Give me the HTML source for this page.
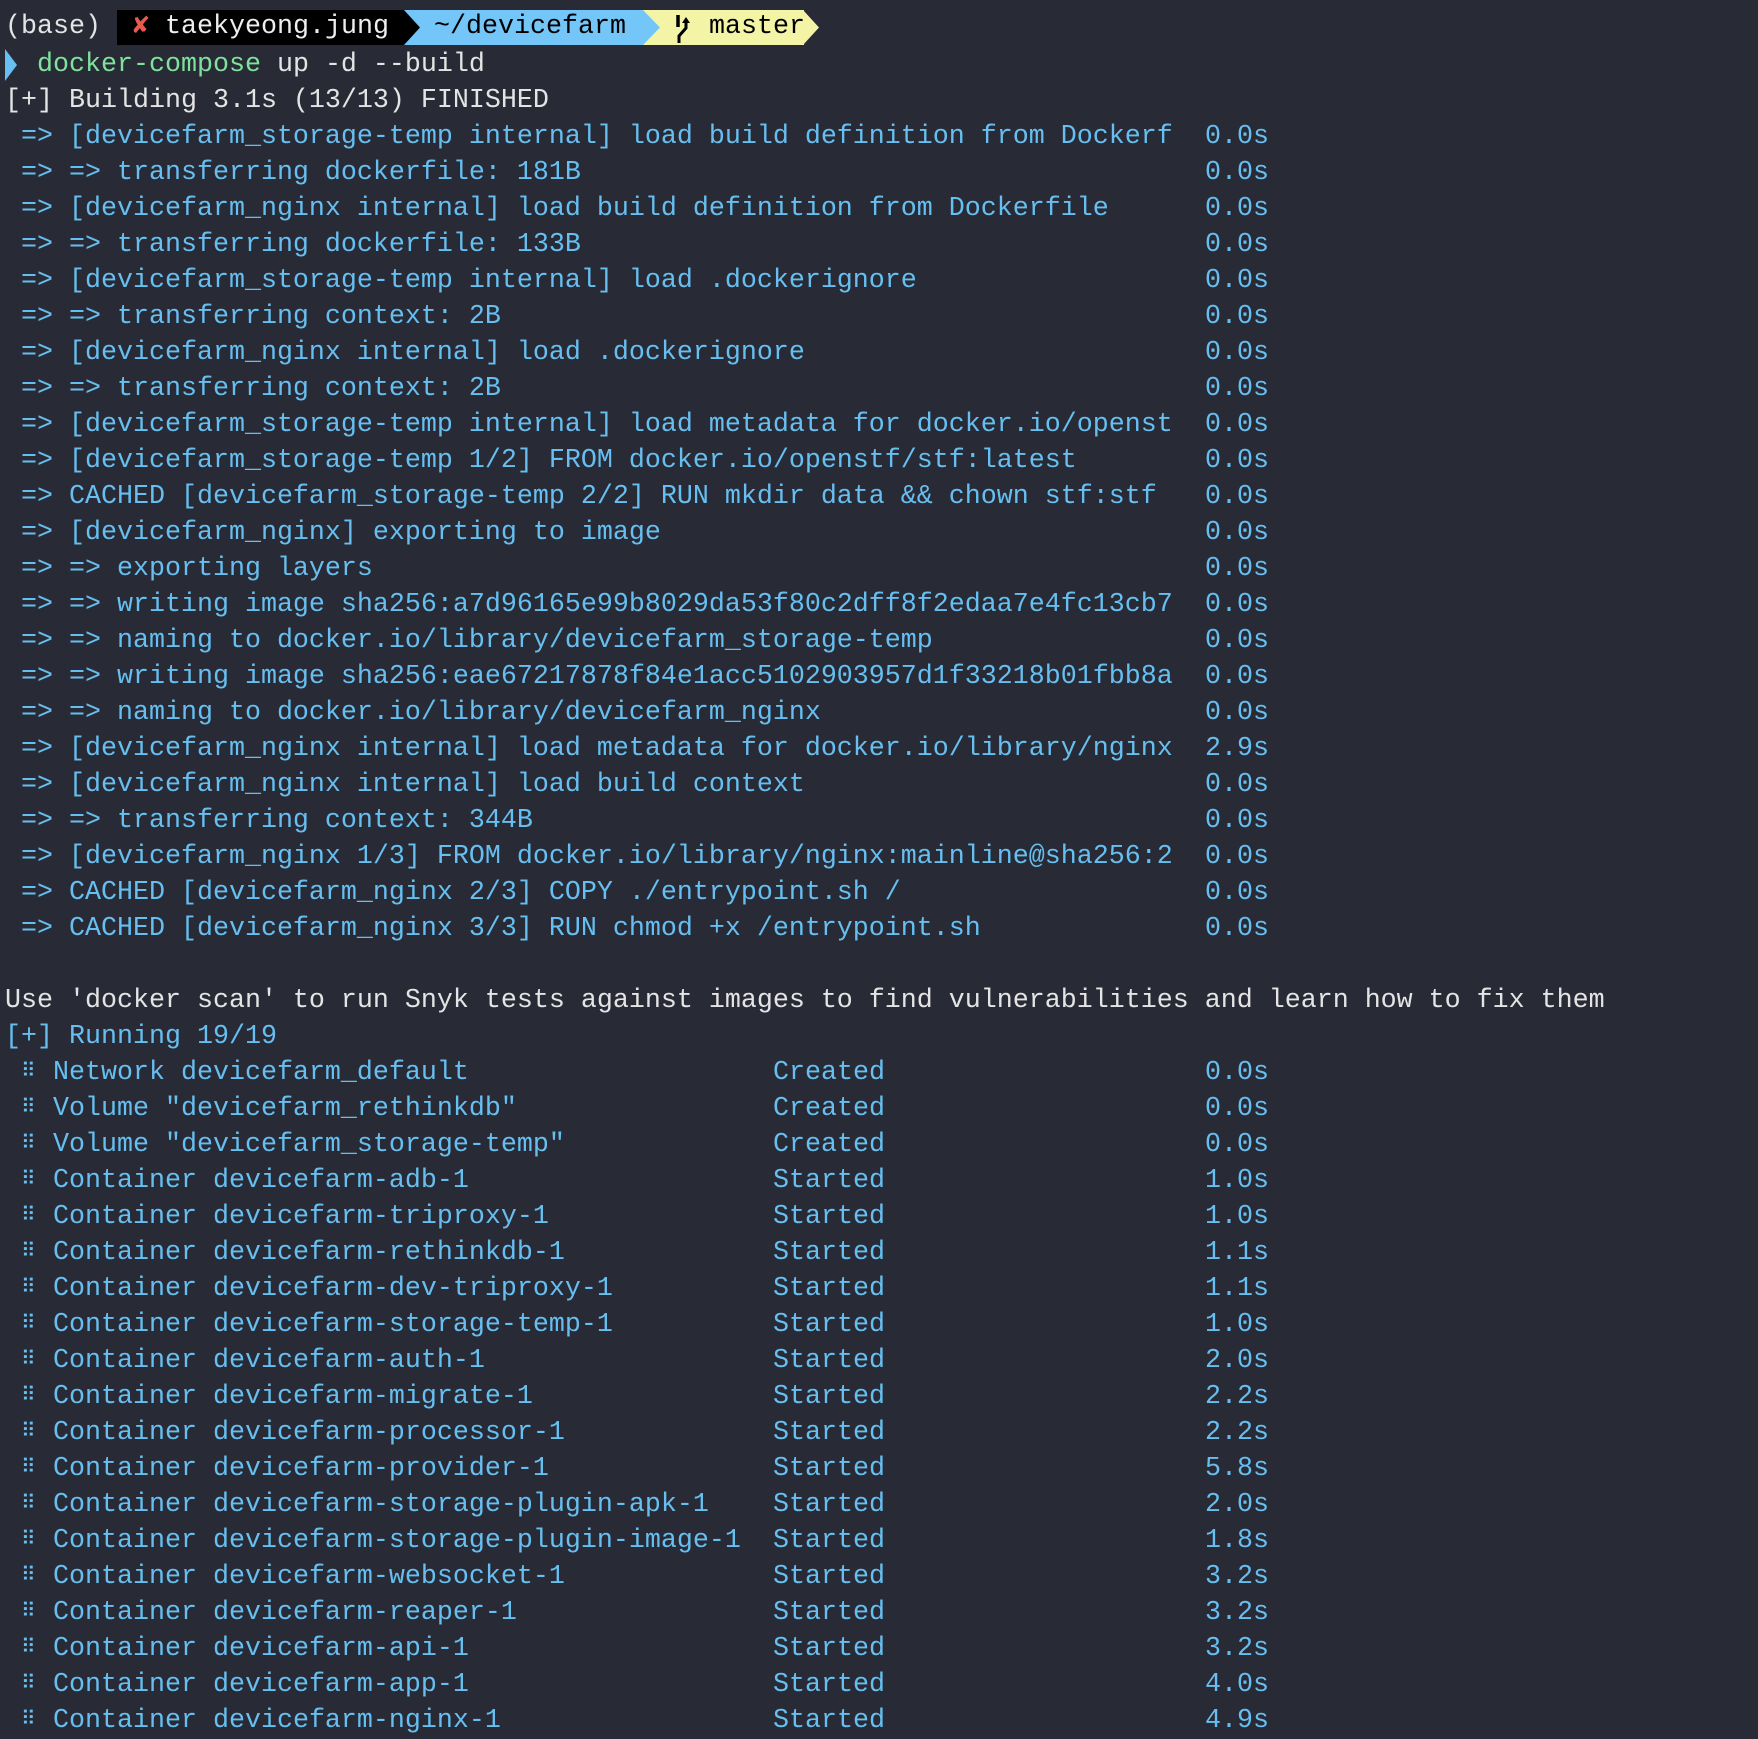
<!DOCTYPE html>
<html><head><meta charset="utf-8"><style>
html,body{margin:0;padding:0;background:#282a36;width:1758px;height:1734px;overflow:hidden}
body{font-family:"Liberation Mono","DejaVu Sans Mono",monospace;font-size:26.67px;color:#e4e4e4}
.seg{position:absolute;top:10px;height:35px}
.t{position:absolute;top:0;left:0;line-height:35px;white-space:pre}
#lines{position:absolute;top:47px;left:5px;width:1750px}
.l{position:relative;height:36px;line-height:36px;white-space:pre}
.b{color:#66bff0}
.g{color:#7ee29c}
.tm{position:absolute;left:1200px;top:0}
.st{position:absolute;left:768px;top:0}
.br{display:inline-block;width:16px;overflow:hidden;font-size:20px;vertical-align:top}
</style></head><body>
<div class="t" style="left:5px;top:10px;">(base)</div>
<div class="seg" style="left:117px;width:287px;background:#000"></div>
<div class="seg" style="left:404px;width:239px;background:#74c6f8"></div>
<div class="seg" style="left:404px;width:16px;background:#000;clip-path:polygon(0 0,0 100%,100% 50%)"></div>
<div class="seg" style="left:643px;width:161px;background:#f4f4a6"></div>
<div class="seg" style="left:643px;width:17px;background:#74c6f8;clip-path:polygon(0 0,0 100%,100% 50%)"></div>
<div class="seg" style="left:803px;width:16px;background:#f4f4a6;clip-path:polygon(0 0,0 100%,100% 50%)"></div>
<div class="t" style="left:133px;top:10px;color:#e85a50;font-weight:bold">✘</div>
<div class="t" style="left:165px;top:10px;color:#eee">taekyeong.jung</div>
<div class="t" style="left:434px;top:10px;color:#000">~/devicefarm</div>
<svg style="position:absolute;left:674px;top:14px" width="18" height="30" viewBox="0 0 18 30"><path d="M4 1V13" stroke="#000" stroke-width="3.5" fill="none"/><path d="M12 8V14L5 22V29" stroke="#000" stroke-width="3" fill="none"/><path d="M8 9L12 3L16 9Z" fill="#000"/></svg>
<div class="t" style="left:709px;top:10px;color:#000">master</div>
<div style="position:absolute;left:5px;top:49px;width:0;height:0;border-top:16px solid transparent;border-bottom:16px solid transparent;border-left:12px solid #66bff0"></div>
<div id="lines">
<div class="l">  <span class="g">docker-compose</span> up -d --build</div>
<div class="l">[+] Building 3.1s (13/13) FINISHED</div>
<div class="l b"> =&gt; [devicefarm_storage-temp internal] load build definition from Dockerf<span class="tm">0.0s</span></div>
<div class="l b"> =&gt; =&gt; transferring dockerfile: 181B<span class="tm">0.0s</span></div>
<div class="l b"> =&gt; [devicefarm_nginx internal] load build definition from Dockerfile<span class="tm">0.0s</span></div>
<div class="l b"> =&gt; =&gt; transferring dockerfile: 133B<span class="tm">0.0s</span></div>
<div class="l b"> =&gt; [devicefarm_storage-temp internal] load .dockerignore<span class="tm">0.0s</span></div>
<div class="l b"> =&gt; =&gt; transferring context: 2B<span class="tm">0.0s</span></div>
<div class="l b"> =&gt; [devicefarm_nginx internal] load .dockerignore<span class="tm">0.0s</span></div>
<div class="l b"> =&gt; =&gt; transferring context: 2B<span class="tm">0.0s</span></div>
<div class="l b"> =&gt; [devicefarm_storage-temp internal] load metadata for docker.io/openst<span class="tm">0.0s</span></div>
<div class="l b"> =&gt; [devicefarm_storage-temp 1/2] FROM docker.io/openstf/stf:latest<span class="tm">0.0s</span></div>
<div class="l b"> =&gt; CACHED [devicefarm_storage-temp 2/2] RUN mkdir data &amp;&amp; chown stf:stf<span class="tm">0.0s</span></div>
<div class="l b"> =&gt; [devicefarm_nginx] exporting to image<span class="tm">0.0s</span></div>
<div class="l b"> =&gt; =&gt; exporting layers<span class="tm">0.0s</span></div>
<div class="l b"> =&gt; =&gt; writing image sha256:a7d96165e99b8029da53f80c2dff8f2edaa7e4fc13cb7<span class="tm">0.0s</span></div>
<div class="l b"> =&gt; =&gt; naming to docker.io/library/devicefarm_storage-temp<span class="tm">0.0s</span></div>
<div class="l b"> =&gt; =&gt; writing image sha256:eae67217878f84e1acc5102903957d1f33218b01fbb8a<span class="tm">0.0s</span></div>
<div class="l b"> =&gt; =&gt; naming to docker.io/library/devicefarm_nginx<span class="tm">0.0s</span></div>
<div class="l b"> =&gt; [devicefarm_nginx internal] load metadata for docker.io/library/nginx<span class="tm">2.9s</span></div>
<div class="l b"> =&gt; [devicefarm_nginx internal] load build context<span class="tm">0.0s</span></div>
<div class="l b"> =&gt; =&gt; transferring context: 344B<span class="tm">0.0s</span></div>
<div class="l b"> =&gt; [devicefarm_nginx 1/3] FROM docker.io/library/nginx:mainline@sha256:2<span class="tm">0.0s</span></div>
<div class="l b"> =&gt; CACHED [devicefarm_nginx 2/3] COPY ./entrypoint.sh /<span class="tm">0.0s</span></div>
<div class="l b"> =&gt; CACHED [devicefarm_nginx 3/3] RUN chmod +x /entrypoint.sh<span class="tm">0.0s</span></div>
<div class="l"> </div>
<div class="l">Use 'docker scan' to run Snyk tests against images to find vulnerabilities and learn how to fix them</div>
<div class="l b">[+] Running 19/19</div>
<div class="l b"> <span class="br">⠿</span> Network devicefarm_default<span class="st">Created</span><span class="tm">0.0s</span></div>
<div class="l b"> <span class="br">⠿</span> Volume "devicefarm_rethinkdb"<span class="st">Created</span><span class="tm">0.0s</span></div>
<div class="l b"> <span class="br">⠿</span> Volume "devicefarm_storage-temp"<span class="st">Created</span><span class="tm">0.0s</span></div>
<div class="l b"> <span class="br">⠿</span> Container devicefarm-adb-1<span class="st">Started</span><span class="tm">1.0s</span></div>
<div class="l b"> <span class="br">⠿</span> Container devicefarm-triproxy-1<span class="st">Started</span><span class="tm">1.0s</span></div>
<div class="l b"> <span class="br">⠿</span> Container devicefarm-rethinkdb-1<span class="st">Started</span><span class="tm">1.1s</span></div>
<div class="l b"> <span class="br">⠿</span> Container devicefarm-dev-triproxy-1<span class="st">Started</span><span class="tm">1.1s</span></div>
<div class="l b"> <span class="br">⠿</span> Container devicefarm-storage-temp-1<span class="st">Started</span><span class="tm">1.0s</span></div>
<div class="l b"> <span class="br">⠿</span> Container devicefarm-auth-1<span class="st">Started</span><span class="tm">2.0s</span></div>
<div class="l b"> <span class="br">⠿</span> Container devicefarm-migrate-1<span class="st">Started</span><span class="tm">2.2s</span></div>
<div class="l b"> <span class="br">⠿</span> Container devicefarm-processor-1<span class="st">Started</span><span class="tm">2.2s</span></div>
<div class="l b"> <span class="br">⠿</span> Container devicefarm-provider-1<span class="st">Started</span><span class="tm">5.8s</span></div>
<div class="l b"> <span class="br">⠿</span> Container devicefarm-storage-plugin-apk-1<span class="st">Started</span><span class="tm">2.0s</span></div>
<div class="l b"> <span class="br">⠿</span> Container devicefarm-storage-plugin-image-1<span class="st">Started</span><span class="tm">1.8s</span></div>
<div class="l b"> <span class="br">⠿</span> Container devicefarm-websocket-1<span class="st">Started</span><span class="tm">3.2s</span></div>
<div class="l b"> <span class="br">⠿</span> Container devicefarm-reaper-1<span class="st">Started</span><span class="tm">3.2s</span></div>
<div class="l b"> <span class="br">⠿</span> Container devicefarm-api-1<span class="st">Started</span><span class="tm">3.2s</span></div>
<div class="l b"> <span class="br">⠿</span> Container devicefarm-app-1<span class="st">Started</span><span class="tm">4.0s</span></div>
<div class="l b"> <span class="br">⠿</span> Container devicefarm-nginx-1<span class="st">Started</span><span class="tm">4.9s</span></div>
</div>
</body></html>
